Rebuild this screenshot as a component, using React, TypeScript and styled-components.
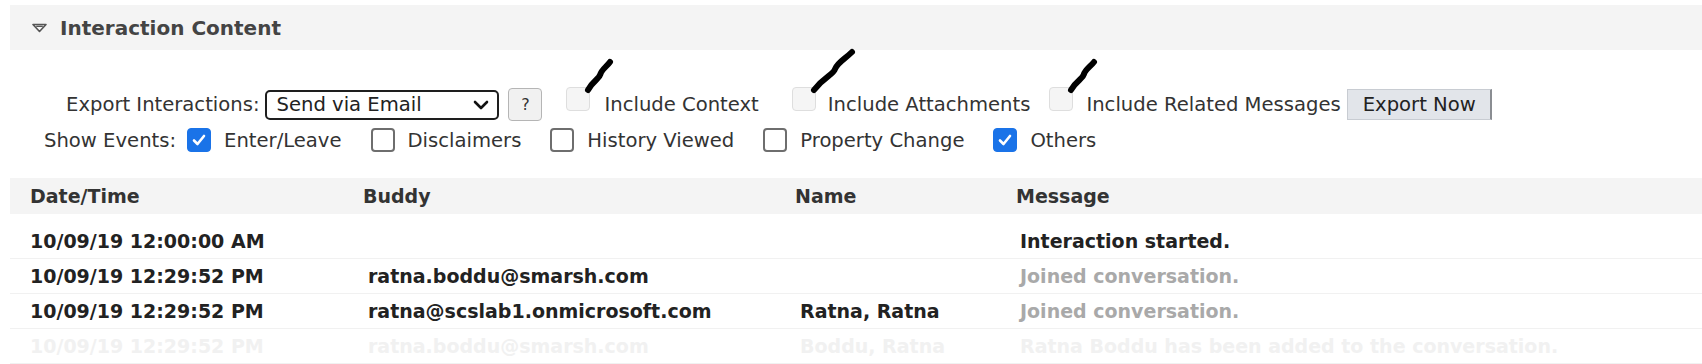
import React from 'react';
import styled, { createGlobalStyle } from 'styled-components';

const GlobalStyle = createGlobalStyle`
    html, body {
        margin: 0;
        padding: 0;
        background: #ffffff;
    }
    body {
        font-family: "DejaVu Sans", Verdana, sans-serif;
        color: #333;
    }
`;

const Page = styled.div`
    width: 1702px;
    height: 364px;
    overflow: hidden;
    padding-top: 5px;
    box-sizing: border-box;
`;

const SectionBar = styled.div`
    margin-left: 10px;
    height: 45px;
    background: #f4f4f4;
    display: flex;
    align-items: center;
    gap: 13px;
    padding-left: 22px;
    font-size: 20px;
    font-weight: bold;
    color: #444;
`;

const Controls = styled.div`
    display: flex;
    flex-direction: column;
    gap: 7px;
    margin-top: 38px;
`;

const ControlRow = styled.div<{ $indent: number }>`
    display: flex;
    align-items: center;
    padding-left: ${({ $indent }) => $indent}px;
    font-size: 19.6px;
    color: #333;
    white-space: nowrap;
`;

const Label = styled.span<{ $before?: number; $after?: number }>`
    margin-left: ${({ $before }) => $before ?? 0}px;
    margin-right: ${({ $after }) => $after ?? 0}px;
`;

const Select = styled.div`
    width: 234px;
    height: 30px;
    box-sizing: border-box;
    border: 2px solid #1e1e1e;
    border-radius: 5px;
    display: flex;
    align-items: center;
    justify-content: space-between;
    padding: 0 8px 0 9px;
    color: #222;
    margin-left: 6px;
`;

const HelpButton = styled.div`
    width: 34px;
    height: 33px;
    box-sizing: border-box;
    border: 1px solid #b5b5b5;
    border-radius: 4px;
    background: #f1f1f1;
    display: flex;
    align-items: center;
    justify-content: center;
    font-size: 16px;
    color: #333;
    margin-left: 9px;
    margin-right: 24px;
`;

const BoxWrap = styled.span<{ $lift?: boolean }>`
    position: relative;
    display: inline-flex;
    align-self: ${({ $lift }) => ($lift ? 'flex-start' : 'center')};
    margin-top: ${({ $lift }) => ($lift ? '-1px' : '0')};
`;

const Box = styled.span<{ $state: 'on' | 'off' | 'disabled' }>`
    width: 24px;
    height: 24px;
    box-sizing: border-box;
    border-radius: 4px;
    display: inline-flex;
    align-items: center;
    justify-content: center;
    background: ${({ $state }) => ($state === 'on' ? '#1a73e8' : $state === 'disabled' ? '#f5f5f5' : '#fff')};
    border: ${({ $state }) =>
        $state === 'on' ? '1px solid #1a73e8' : $state === 'disabled' ? '1px solid #dedede' : '2px solid #6e6e6e'};
`;

/* hand-drawn redaction strokes above the export checkboxes */
const Mark = styled.svg`
    position: absolute;
    left: 20px;
    bottom: 19px;
    overflow: visible;
`;

const ExportButton = styled.div`
    height: 31px;
    box-sizing: border-box;
    padding: 0 14px 0 15px;
    display: flex;
    align-items: center;
    background: #e2e5ea;
    border: 1px solid #c8ccd2;
    border-right: 2px solid #8a8d92;
    color: #222;
    margin-left: 6px;
`;

const Table = styled.div`
    margin-top: 26px;
    margin-left: 10px;
`;

const Columns = styled.div`
    display: grid;
    grid-template-columns: 333px 432px 221px 1fr;
    padding-left: 20px;
    align-items: center;
`;

const HeadRow = styled(Columns)`
    height: 36px;
    background: #f4f4f4;
    font-size: 19px;
    font-weight: bold;
    color: #333;
`;

const Body = styled.div`
    padding-top: 10px;
`;

const Row = styled(Columns)<{ $ghost?: boolean }>`
    height: 35px;
    border-bottom: 1px solid #f1f1f1;
    box-sizing: border-box;
    font-size: 19px;
    font-weight: bold;
    color: ${({ $ghost }) => ($ghost ? '#f1f1f1' : '#222')};
`;

const Cell = styled.span<{ $muted?: boolean; $shift?: number }>`
    padding-left: ${({ $shift }) => $shift ?? 0}px;
    color: ${({ $muted }) => ($muted ? '#a9a9a9' : 'inherit')};
    white-space: nowrap;
`;

const Triangle = () => (
    <svg width="15" height="10" viewBox="0 0 15 10">
        <path d="M1 1.5 H14 L7.5 8.5 Z" fill="none" stroke="#555" strokeWidth="1.6" strokeLinejoin="round" />
        <path d="M4.2 3.3 H10.8" stroke="#555" strokeWidth="1.4" />
    </svg>
);

const Check = () => (
    <svg width="16" height="16" viewBox="0 0 16 16">
        <path d="M3 8.5 L6.5 12 L13 4" fill="none" stroke="#fff" strokeWidth="2.6" strokeLinecap="round" strokeLinejoin="round" />
    </svg>
);

const Chevron = () => (
    <svg width="16" height="12" viewBox="0 0 16 12">
        <path d="M2 3 L8 9 L14 3" fill="none" stroke="#111" strokeWidth="2.6" strokeLinecap="round" strokeLinejoin="round" />
    </svg>
);

type CheckboxProps = {
    readonly state: 'on' | 'off' | 'disabled'
    readonly mark?: { dx: number, dy: number }
};

const Checkbox = ({ state, mark }: CheckboxProps) => (
    <BoxWrap $lift={state === 'disabled'}>
        <Box $state={state}>{state === 'on' && <Check />}</Box>
        {mark &&
            <Mark width={mark.dx} height={mark.dy} viewBox={`0 0 ${mark.dx} ${mark.dy}`}>
                <path
                    d={`M2 ${mark.dy - 2} C ${mark.dx * 0.3} ${mark.dy * 0.62}, ${mark.dx * 0.5} ${mark.dy * 0.6}, ${mark.dx * 0.55} ${mark.dy * 0.45} S ${mark.dx * 0.8} ${mark.dy * 0.2}, ${mark.dx - 2} 2`}
                    fill="none" stroke="#000" strokeWidth="6" strokeLinecap="round" />
            </Mark>
        }
    </BoxWrap>
);

const events = [
    { label: 'Enter/Leave', on: true },
    { label: 'Disclaimers', on: false },
    { label: 'History Viewed', on: false },
    { label: 'Property Change', on: false },
    { label: 'Others', on: true }
];

const rows = [
    { time: '10/09/19 12:00:00 AM', buddy: '', name: '', message: 'Interaction started.', muted: false },
    { time: '10/09/19 12:29:52 PM', buddy: 'ratna.boddu@smarsh.com', name: '', message: 'Joined conversation.', muted: true },
    { time: '10/09/19 12:29:52 PM', buddy: 'ratna@scslab1.onmicrosoft.com', name: 'Ratna, Ratna', message: 'Joined conversation.', muted: true }
];

export default function App() {
    return (
        <Page>
            <GlobalStyle />
            <SectionBar>
                <Triangle />
                <span>Interaction Content</span>
            </SectionBar>

            <Controls>
                <ControlRow $indent={66}>
                    <Label>Export Interactions:</Label>
                    <Select>
                        <span>Send via Email</span>
                        <Chevron />
                    </Select>
                    <HelpButton>?</HelpButton>
                    <Checkbox state='disabled' mark={{ dx: 26, dy: 32 }} />
                    <Label $before={14} $after={33}>Include Context</Label>
                    <Checkbox state='disabled' mark={{ dx: 42, dy: 42 }} />
                    <Label $before={12} $after={19}>Include Attachments</Label>
                    <Checkbox state='disabled' mark={{ dx: 27, dy: 32 }} />
                    <Label $before={13}>Include Related Messages</Label>
                    <ExportButton>Export Now</ExportButton>
                </ControlRow>
                <ControlRow $indent={44}>
                    <Label $after={11}>Show Events:</Label>
                    {events.map(e => (
                        <React.Fragment key={e.label}>
                            <Checkbox state={e.on ? 'on' : 'off'} />
                            <Label $before={13} $after={29}>{e.label}</Label>
                        </React.Fragment>
                    ))}
                </ControlRow>
            </Controls>

            <Table>
                <HeadRow>
                    <span>Date/Time</span>
                    <span>Buddy</span>
                    <span>Name</span>
                    <span>Message</span>
                </HeadRow>
                <Body>
                    {rows.map((r, i) => (
                        <Row key={i}>
                            <Cell>{r.time}</Cell>
                            <Cell $shift={5}>{r.buddy}</Cell>
                            <Cell $shift={5}>{r.name}</Cell>
                            <Cell $shift={4} $muted={r.muted}>{r.message}</Cell>
                        </Row>
                    ))}
                    <Row $ghost>
                        <Cell>10/09/19 12:29:52 PM</Cell>
                        <Cell $shift={5}>ratna.boddu@smarsh.com</Cell>
                        <Cell $shift={5}>Boddu, Ratna</Cell>
                        <Cell $shift={4}>Ratna Boddu has been added to the conversation.</Cell>
                    </Row>
                </Body>
            </Table>
        </Page>
    );
}
